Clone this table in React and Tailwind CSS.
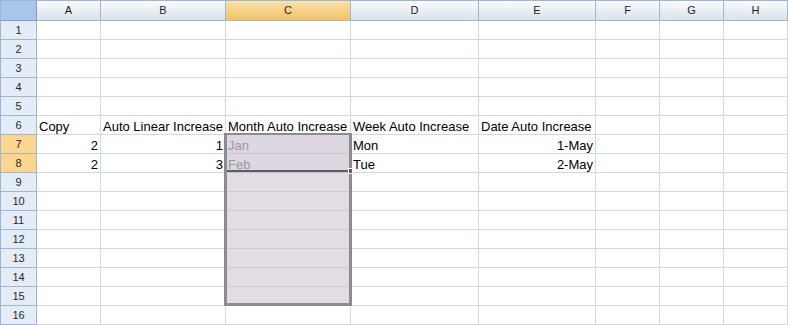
const COLS = [
  { key: 'A', w: 64 },
  { key: 'B', w: 125 },
  { key: 'C', w: 125 },
  { key: 'D', w: 128 },
  { key: 'E', w: 117 },
  { key: 'F', w: 64 },
  { key: 'G', w: 64 },
  { key: 'H', w: 64 },
];

// cell contents: row -> col -> [text, align]
const DATA = {
  6: {
    A: ['Copy', 'l'],
    B: ['Auto Linear Increase', 'l'],
    C: ['Month Auto Increase', 'l'],
    D: ['Week Auto Increase', 'l'],
    E: ['Date Auto Increase', 'l'],
  },
  7: { A: ['2', 'r'], B: ['1', 'r'], C: ['Jan', 'l'], D: ['Mon', 'l'], E: ['1-May', 'r'] },
  8: { A: ['2', 'r'], B: ['3', 'r'], C: ['Feb', 'l'], D: ['Tue', 'l'], E: ['2-May', 'r'] },
};

const ROWS = Array.from({ length: 16 }, (_, i) => i + 1);

function ColHeader({ label, active }) {
  return (
    <div
      className={`flex items-center justify-center border-r border-b border-[#9eb6ce] text-[11px] text-[#1e1e1e] ${
        active
          ? 'bg-linear-to-b from-[#fae2ac] to-[#f2c166]'
          : 'bg-linear-to-b from-[#fafbfd] to-[#dbe2ec]'
      }`}
    >
      {label}
    </div>
  );
}

function RowHeader({ n, active }) {
  return (
    <div
      className={`flex items-center justify-center border-r border-b border-[#9eb6ce] text-[11px] text-[#2a2a2a] ${
        active ? 'bg-[#fcd58f]' : 'bg-[#e4ecf7]'
      }`}
    >
      {n}
    </div>
  );
}

function Cell({ row, col }) {
  const item = DATA[row]?.[col];
  const inSel = col === 'C' && row >= 7 && row <= 15;
  const top = col === 'C' && (row === 7 || row === 8);

  let cls = 'border-[#d0d7e5] bg-white';
  if (top) cls = 'border-[#c7c2cd] bg-[#dcd7e1]';
  else if (inSel) cls = 'border-[#cdc8d4] bg-[#e2dce3]';

  return (
    <div
      className={`flex items-end overflow-hidden whitespace-nowrap border-r border-b px-[2px] text-[13px] leading-[15px] ${cls} ${
        item?.[1] === 'r' ? 'justify-end' : 'justify-start'
      } ${top ? 'text-[#9b97a0]' : 'text-black'}`}
    >
      {item?.[0]}
    </div>
  );
}

export default function App() {
  return (
    <div className="relative h-[325px] w-[788px] overflow-hidden bg-white font-['Liberation_Sans',Arial,sans-serif]">
      <div className="grid grid-cols-[36px_64px_125px_125px_128px_117px_64px_64px_64px] grid-rows-[20px_repeat(16,19px)] border-t border-l border-[#9eb6ce]">
        <div className="border-r border-b border-[#7f9dbd] bg-[#a9c5eb]" />
        {COLS.map(c => (
          <ColHeader key={c.key} label={c.key} active={c.key === 'C'} />
        ))}
        {ROWS.map(r => [
          <RowHeader key={`h${r}`} n={r} active={r === 7 || r === 8} />,
          ...COLS.map(c => <Cell key={`${c.key}${r}`} row={r} col={c.key} />),
        ])}
      </div>

      {/* selection outline C7:C15 */}
      <div className="pointer-events-none absolute top-[133px] left-[224px] h-[173px] w-[128px] border-[3px] border-t-2 border-[#8c8c8c]" />
      {/* source range bottom edge + fill handle */}
      <div className="absolute top-[170px] left-[227px] h-[2px] w-[122px] bg-[#5f5a63]" />
      <div className="absolute top-[168px] left-[348px] h-[6px] w-[5px] border border-white bg-[#5f5a63]" />
    </div>
  );
}
